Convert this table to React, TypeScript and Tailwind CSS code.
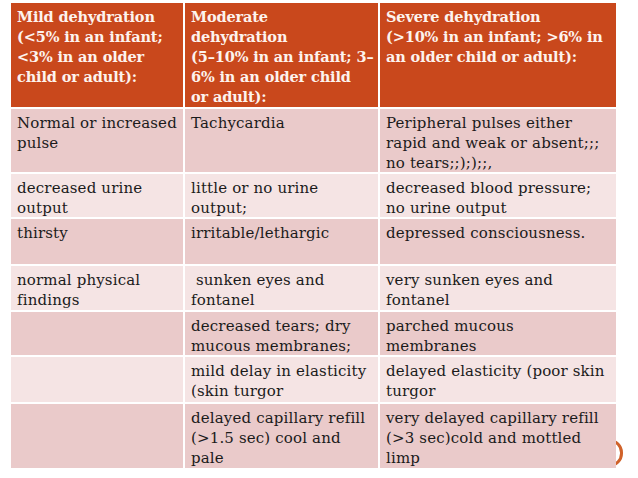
import React from "react";

const H = "bg-[#c9481c] text-[#fdf3ee] font-bold text-[14.5px] tracking-[-0.15px]";
const D = "bg-[#eacaca] text-[15px] tracking-[0.15px]";
const L = "bg-[#f5e4e4] text-[15px] tracking-[0.15px]";

type Row = { bg: string; cells: string[][] };

const rows: Row[] = [
  { bg: D, cells: [["Normal or increased", "pulse"], ["Tachycardia"], ["Peripheral pulses either", "rapid and weak or absent;;;", "no tears;;);)" + ";;,"]] },
  { bg: L, cells: [["decreased urine", "output"], ["little or no urine", "output;"], ["decreased blood pressure;", "no urine output"]] },
  { bg: D, cells: [["thirsty"], ["irritable/lethargic"], ["depressed consciousness."]] },
  { bg: L, cells: [["normal physical", "findings"], ["\u00a0sunken eyes and", "fontanel"], ["very sunken eyes and", "fontanel"]] },
  { bg: D, cells: [[], ["decreased tears; dry", "mucous membranes;"], ["parched mucous", "membranes"]] },
  { bg: L, cells: [[], ["mild delay in elasticity", "(skin turgor"], ["delayed elasticity (poor skin", "turgor"]] },
  { bg: D, cells: [[], ["delayed capillary refill", "(>1.5 sec) cool and", "pale"], ["very delayed capillary refill", "(>3 sec)cold and mottled", "limp"]] },
];

const header = [
  ["Mild dehydration", "(<5% in an infant;", "<3% in an older", "child or adult):"],
  ["Moderate", "dehydration", "(5\u201310% in an infant; 3\u2013", "6% in an older child", "or adult):"],
  ["Severe dehydration", "(>10% in an infant; >6% in", "an older child or adult):"],
];

function Cell({ lines, cls }: { lines: string[]; cls: string }) {
  return (
    <div className={`${cls} pl-[6px] pt-[4px] leading-[20px] whitespace-nowrap overflow-hidden`}>
      {lines.map((l, i) => (
        <div key={i}>{l}</div>
      ))}
    </div>
  );
}

export default function App() {
  return (
    <div
      className="relative w-[638px] h-[478px] bg-white overflow-hidden text-[#1b1b1b]"
      style={{ fontFamily: '"DejaVu Serif", serif' }}
    >
      <div className="absolute left-[596px] top-[439px] w-[27px] h-[28px] rounded-full border-[3px] border-[#d0622a]" />
      <div className="relative pt-[3px] pl-[11px]">
        <div className="grid grid-cols-[172px_193px_236px] grid-rows-[104px_63px_43px_45px_44px_43px_45px_64px] gap-[2px] w-[605px] bg-white">
          {header.map((h, i) => (
            <Cell key={i} lines={h} cls={H} />
          ))}
          {rows.map((r, ri) =>
            r.cells.map((c, ci) => <Cell key={`${ri}-${ci}`} lines={c} cls={r.bg} />)
          )}
        </div>
      </div>
    </div>
  );
}
